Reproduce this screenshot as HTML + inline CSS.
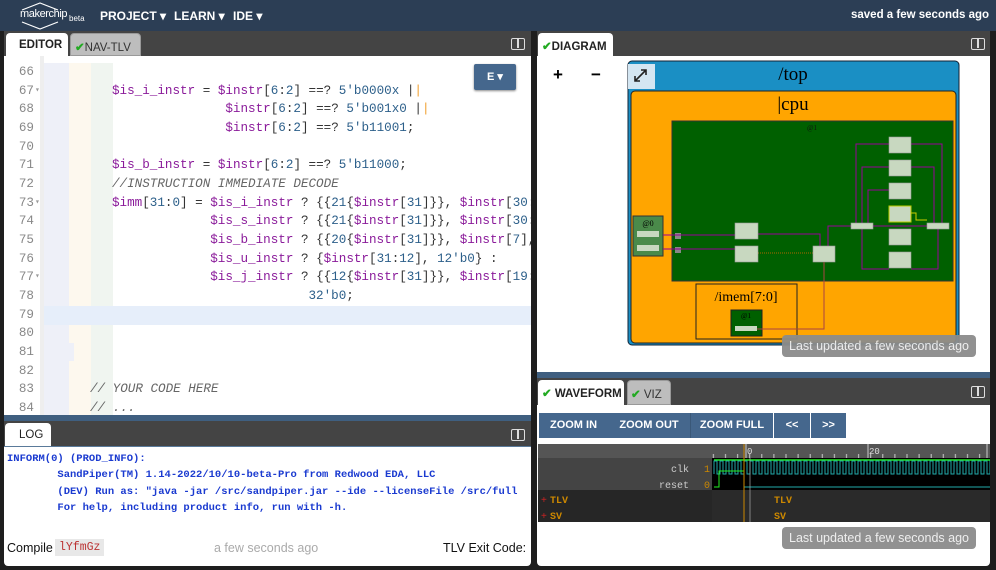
<!DOCTYPE html>
<html><head><meta charset="utf-8"><style>
*{margin:0;padding:0;box-sizing:border-box}
body{width:996px;height:570px;background:#1e1e1e;font-family:"Liberation Sans",sans-serif;position:relative;overflow:hidden}
.abs{position:absolute}
.hdr{left:0;top:0;width:996px;height:31px;background:#2c3e55;color:#fff}
.menu{font-size:12px;font-weight:bold;top:9px;color:#fff}
.tabbar{background:#444;height:25px}
.tab{position:absolute;top:2px;height:23px;font-size:11.5px;font-weight:bold;padding:6px 0 0 6px;border-radius:4px 4px 0 0;white-space:nowrap;overflow:hidden}
.tw{background:#fff;color:#222}
.tg{background:#bdbdbd;color:#333;border:1px solid #999}
.chk{color:#2a2;font-weight:bold}
.split{width:14px;height:12px;border:1.5px solid #ddd;border-radius:2px}
.split:after{content:"";position:absolute;left:5px;top:0;width:1.5px;height:9px;background:#ddd}
.code{font-family:"Liberation Mono",monospace;font-size:12.6px;white-space:pre;line-height:18.67px}
.v{color:#8a1a9a}.n{color:#2c5f8a}.o{color:#333}.c{color:#666;font-style:italic}
.ln{color:#888;text-align:right;width:30px}
.btn{background:#45678d;color:#fff;font-size:11px;font-weight:bold;height:25px;line-height:25px;text-align:center;position:absolute;top:0}
.toast{background:#8c8c8c;color:#eee;font-size:12.5px;border-radius:4px;padding:4px 7px;opacity:.95;white-space:nowrap}
</style></head><body>
<div class="abs hdr">
  <svg class="abs" style="left:18px;top:2px" width="46" height="28"><path d="M4 8 L22 1 L40 8 M4 20 L22 27 L40 20" stroke="#fff" stroke-width="1.2" fill="none"/></svg>
  <div class="abs" style="left:20px;top:8px;font-size:11px;letter-spacing:-0.4px">makerchip</div>
  <div class="abs" style="left:69px;top:14px;font-size:8px">beta</div>
  <div class="abs menu" style="left:100px">PROJECT ▾</div>
  <div class="abs menu" style="left:174px">LEARN ▾</div>
  <div class="abs menu" style="left:233px">IDE ▾</div>
  <div class="abs" style="left:851px;top:9px;font-size:11.5px;font-weight:bold">saved a few seconds ago</div>
</div>

<!-- left panel -->
<div class="abs" style="left:4px;top:31px;width:527px;height:535px;background:#fff;border-radius:0 0 4px 4px"></div>
<div class="abs tabbar" style="left:4px;top:31px;width:527px">
  <div class="tab tw" style="left:2px;width:62px;padding-left:13px">EDITOR</div>
  <div class="tab tg" style="left:66px;width:71px;padding-left:4px;font-weight:normal"><span class="chk">✔</span>NAV-TLV</div>
  <div class="abs split" style="left:507px;top:7px"></div>
</div>
<div class="abs" style="left:4px;top:56px;width:527px;height:359px;background:#fff;overflow:hidden">
  <div class="abs" style="left:36px;top:0;width:4px;height:359px;background:#eee"></div>
  <div class="abs" style="left:40px;top:0;width:25px;height:359px;background:#eef0f8"></div>
  <div class="abs" style="left:65px;top:0;width:22px;height:359px;background:#fdf8ee"></div>
  <div class="abs" style="left:87px;top:0;width:22px;height:359px;background:#f0f5f0"></div>
  <div class="abs" style="left:40px;top:250px;width:487px;height:19px;background:#e6eefa"></div>
  <div class="abs" style="left:40px;top:0;width:487px;height:7px;background:#fff"></div>
  <div class="abs code ln" style="left:0;top:7px">66
67
68
69
70
71
72
73
74
75
76
77
78
79
80
81
82
83
84</div>
  <div class="abs code" style="left:31px;top:7px;color:#999;font-size:8px;line-height:18.67px">
▾





▾



▾</div>
  <div class="abs code" style="left:108px;top:7px">
<span class="v">$is_i_instr</span> <span class="o">=</span> <span class="v">$instr</span><span class="o">[</span><span class="n">6</span><span class="o">:</span><span class="n">2</span><span class="o">] ==?</span> <span class="n">5'b0000x</span> <span class="o">|</span><span style="color:#f0a030">|</span>
               <span class="v">$instr</span><span class="o">[</span><span class="n">6</span><span class="o">:</span><span class="n">2</span><span class="o">] ==?</span> <span class="n">5'b001x0</span> <span class="o">|</span><span style="color:#f0a030">|</span>
               <span class="v">$instr</span><span class="o">[</span><span class="n">6</span><span class="o">:</span><span class="n">2</span><span class="o">] ==?</span> <span class="n">5'b11001</span><span class="o">;</span>

<span class="v">$is_b_instr</span> <span class="o">=</span> <span class="v">$instr</span><span class="o">[</span><span class="n">6</span><span class="o">:</span><span class="n">2</span><span class="o">] ==?</span> <span class="n">5'b11000</span><span class="o">;</span>
<span class="c">//INSTRUCTION IMMEDIATE DECODE</span>
<span class="v">$imm</span><span class="o">[</span><span class="n">31</span><span class="o">:</span><span class="n">0</span><span class="o">] =</span> <span class="v">$is_i_instr</span> <span class="o">? {{</span><span class="n">21</span><span class="o">{</span><span class="v">$instr</span><span class="o">[</span><span class="n">31</span><span class="o">]}},</span> <span class="v">$instr</span><span class="o">[</span><span class="n">30</span><span class="o">:</span>
             <span class="v">$is_s_instr</span> <span class="o">? {{</span><span class="n">21</span><span class="o">{</span><span class="v">$instr</span><span class="o">[</span><span class="n">31</span><span class="o">]}},</span> <span class="v">$instr</span><span class="o">[</span><span class="n">30</span><span class="o">:</span>
             <span class="v">$is_b_instr</span> <span class="o">? {{</span><span class="n">20</span><span class="o">{</span><span class="v">$instr</span><span class="o">[</span><span class="n">31</span><span class="o">]}},</span> <span class="v">$instr</span><span class="o">[</span><span class="n">7</span><span class="o">],</span>
             <span class="v">$is_u_instr</span> <span class="o">? {</span><span class="v">$instr</span><span class="o">[</span><span class="n">31</span><span class="o">:</span><span class="n">12</span><span class="o">],</span> <span class="n">12'b0</span><span class="o">} :</span>
             <span class="v">$is_j_instr</span> <span class="o">? {{</span><span class="n">12</span><span class="o">{</span><span class="v">$instr</span><span class="o">[</span><span class="n">31</span><span class="o">]}},</span> <span class="v">$instr</span><span class="o">[</span><span class="n">19</span><span class="o">:</span>
                          <span class="n">32'b0</span><span class="o">;</span></div>
  <div class="abs code c" style="left:86px;top:324px">// YOUR CODE HERE
// ...</div>
  <div class="abs" style="left:40px;top:287px;width:30px;height:18px;background:#eef0f8"></div>
  <div class="abs" style="left:470px;top:8px;width:42px;height:26px;background:#45678d;color:#fff;font-size:11px;font-weight:bold;text-align:center;line-height:26px;border-radius:2px;box-shadow:0 1px 2px #888">E ▾</div>
</div>
<div class="abs" style="left:4px;top:415px;width:527px;height:6px;background:#3f5f80"></div>
<div class="abs tabbar" style="left:4px;top:421px;width:527px;height:25px">
  <div class="tab tw" style="left:1px;width:46px;padding-left:14px;font-weight:normal">LOG</div>
  <div class="abs split" style="left:507px;top:8px"></div>
</div>
<div class="abs" style="left:4px;top:446px;width:527px;height:1px;background:#5a7a9a"></div>
<div class="abs code" style="left:7px;top:451px;font-size:10.5px;line-height:16.3px;color:#1a3ad0;font-weight:bold;width:523px;overflow:hidden">INFORM(0) (PROD_INFO):
        SandPiper(TM) 1.14-2022/10/10-beta-Pro from Redwood EDA, LLC
        (DEV) Run as: "java -jar /src/sandpiper.jar --ide --licenseFile /src/full
        For help, including product info, run with -h.</div>
<div class="abs" style="left:7px;top:541px;font-size:12.5px;color:#111">Compile</div>
<div class="abs code" style="left:55px;top:539px;background:#e8e8e8;color:#b33;font-size:11.5px;line-height:17px;padding:0 4px">lYfmGz</div>
<div class="abs" style="left:214px;top:541px;font-size:12.5px;color:#aaa">a few seconds ago</div>
<div class="abs" style="left:443px;top:541px;font-size:12.5px;color:#111">TLV Exit Code:</div>

<!-- right panel -->
<div class="abs" style="left:537px;top:31px;width:453px;height:535px;background:#fff;border-radius:0 0 4px 4px"></div>
<div class="abs tabbar" style="left:537px;top:31px;width:453px">
  <div class="tab tw" style="left:1px;width:75px;padding-left:4px"><span class="chk">✔</span>DIAGRAM</div>
  <div class="abs split" style="left:434px;top:7px"></div>
</div>
<div class="abs" style="left:553px;top:65px;font-size:17px;font-weight:bold">+</div>
<div class="abs" style="left:591px;top:65px;font-size:17px;font-weight:bold">−</div>
<svg class="abs" style="left:536px;top:56px" width="454" height="316">
  <rect x="92" y="5" width="331" height="284" rx="4" fill="#1a8fc4" stroke="#123" stroke-width="1"/>
  <rect x="92" y="8" width="27" height="25" fill="#d4e6f2"/>
  <path d="M99 25 L110 14 M105 14 H110 V19 M99 20 V25 H104" stroke="#222" stroke-width="1.6" fill="none"/>
  <text x="257" y="24" font-family="Liberation Serif" font-size="19" text-anchor="middle">/top</text>
  <rect x="95" y="35" width="325" height="252" rx="4" fill="#ffa500" stroke="#222"/>
  <text x="257" y="54" font-family="Liberation Serif" font-size="19" text-anchor="middle">|cpu</text>
  <rect x="136" y="65" width="281" height="160" fill="#006000" stroke="#333"/>
  <text x="276" y="74" font-family="Liberation Serif" font-size="7" text-anchor="middle" fill="#111">@1</text>
  <rect x="97" y="160" width="30" height="40" fill="#4a8a4a" stroke="#333"/>
  <text x="112" y="170" font-family="Liberation Serif" font-size="8" text-anchor="middle">@0</text>
  <rect x="101" y="175" width="22" height="6" fill="#c8d8c0"/><rect x="101" y="189" width="22" height="6" fill="#c8d8c0"/>
  <rect x="139" y="177" width="6" height="6" fill="#888"/><rect x="139" y="191" width="6" height="6" fill="#888"/>
  <g stroke="#909" stroke-width="1" fill="none">
    <path d="M127 179 H199 M127 193 H199 M222 178 H284 V190 M292 190 V170 H315 M337 170 H391 M320 170 V88 H353 M326 170 V111 H353 M332 170 V134 H353 M326 170 V213 H353 M375 88 H406 V167 M375 111 H398 V167 M375 213 H402 V173"/>
  </g>
  <path d="M222 197 H277" stroke="#a60" stroke-dasharray="1 1"/>
  <path d="M375 157 H380 V164 H391" stroke="#cc0" fill="none"/>
  <g fill="#c8d8c0" stroke="#999" stroke-width=".6">
    <rect x="199" y="167" width="23" height="16"/><rect x="199" y="190" width="23" height="16"/>
    <rect x="277" y="190" width="22" height="16"/><rect x="315" y="167" width="22" height="6"/>
    <rect x="391" y="167" width="22" height="6"/>
    <rect x="353" y="81" width="22" height="16"/><rect x="353" y="104" width="22" height="16"/>
    <rect x="353" y="127" width="22" height="16"/><rect x="353" y="150" width="22" height="16" stroke="#bc0" stroke-width="1"/>
    <rect x="353" y="173" width="22" height="16"/><rect x="353" y="196" width="22" height="16"/>
  </g>
  <rect x="160" y="228" width="101" height="55" fill="none" stroke="#222"/>
  <text x="210" y="245" font-family="Liberation Serif" font-size="14" text-anchor="middle">/imem[7:0]</text>
  <rect x="195" y="254" width="31" height="26" fill="#006000" stroke="#222"/>
  <text x="210" y="262" font-family="Liberation Serif" font-size="7" text-anchor="middle">@1</text>
  <rect x="199" y="270" width="22" height="5" fill="#c8d8c0"/>
  <path d="M221 273 H288 V206" stroke="#a44" fill="none"/>
</svg>
<div class="abs toast" style="left:782px;top:335px">Last updated a few seconds ago</div>

<div class="abs" style="left:537px;top:372px;width:453px;height:6px;background:#3f5f80"></div>
<div class="abs tabbar" style="left:537px;top:378px;width:453px;height:27px">
  <div class="tab tw" style="left:1px;width:86px;height:25px;padding-left:4px"><span class="chk">✔</span> WAVEFORM</div>
  <div class="tab tg" style="left:90px;width:44px;height:25px;padding-left:3px;font-weight:normal"><span class="chk">✔</span> VIZ</div>
  <div class="abs split" style="left:434px;top:8px"></div>
</div>
<div class="abs" style="left:539px;top:413px;width:452px;height:25px">
  <div class="btn" style="left:0;width:167px;background:#45678d"></div>
  <div class="btn" style="left:0;width:69px">ZOOM IN</div>
  <div class="btn" style="left:69px;width:82px">ZOOM OUT</div>
  <div class="btn" style="left:151px;width:83px;border-left:1px solid #3a5878">ZOOM FULL</div>
  <div class="btn" style="left:235px;width:36px">&lt;&lt;</div>
  <div class="btn" style="left:272px;width:35px">&gt;&gt;</div>
</div>
<svg class="abs" style="left:538px;top:444px" width="452" height="78">
  <rect width="452" height="78" fill="#2a2a2a"/>
  <rect width="452" height="14" fill="#555"/>
  <rect x="0" y="14" width="174" height="32" fill="#444"/>
  <rect x="174" y="14" width="278" height="32" fill="#000"/>
  <defs>
    <pattern id="t" x="0" y="0" width="12.1" height="14" patternUnits="userSpaceOnUse"><path d="M6 0 V14" stroke="#ccc"/></pattern>
  </defs>
  <rect x="174" y="10" width="278" height="4" fill="url(#t)"/>
  <path d="M208 0 V14 M330 0 V14 M449 0 V14" stroke="#ccc"/>
  <text x="209" y="10" fill="#ddd" font-size="9" font-family="Liberation Mono">0</text>
  <text x="331" y="10" fill="#ddd" font-size="9" font-family="Liberation Mono">20</text>
  <path d="M176 16 H452" stroke="#2e2" stroke-width="1.5"/>
  <path d="M176 30 v-13h3v13h3v-13h3v13h3v-13h3v13h3v-13h3v13h3v-13h3v13h3v-13h3v13h3v-13h3v13h3v-13h3v13h3v-13h3v13h3v-13h3v13h3v-13h3v13h3v-13h3v13h3v-13h3v13h3v-13h3v13h3v-13h3v13h3v-13h3v13h3v-13h3v13h3v-13h3v13h3v-13h3v13h3v-13h3v13h3v-13h3v13h3v-13h3v13h3v-13h3v13h3v-13h3v13h3v-13h3v13h3v-13h3v13h3v-13h3v13h3v-13h3v13h3v-13h3v13h3v-13h3v13h3v-13h3v13h3v-13h3v13h3v-13h3v13h3v-13h3v13h3v-13h3v13h3v-13h3v13h3v-13h3v13h3v-13h3v13h3v-13h3v13h3v-13h3v13h3v-13h3v13h3v-13h3v13h3v-13h3v13h3v-13h3v13h3v-13h3v13h3v-13h3v13h3v-13h3v13h3v-13h3v13h3v-13h3v13h3v-13h3v13h3v-13h3v13h3v-13h3v13h3v-13h3v13h3v-13h3v13h3v-13h3v13h3v-13h3v13h3v-13h3v13h3v-13h3v13h3v-13h3v13h3v-13h3v13h3" stroke="#2aa" stroke-width="1" fill="none"/>
  <path d="M176 43 H181 V27 H206" stroke="#2e2" fill="none"/>
  <path d="M206 43 H452" stroke="#2aa" fill="none"/>
  <text x="151" y="28" fill="#ccc" font-size="10" font-family="Liberation Mono" text-anchor="end">clk</text>
  <text x="151" y="44" fill="#ccc" font-size="10" font-family="Liberation Mono" text-anchor="end">reset</text>
  <text x="166" y="28" fill="#c80" font-size="10" font-family="Liberation Mono">1</text>
  <text x="166" y="44" fill="#c80" font-size="10" font-family="Liberation Mono">0</text>
  <rect x="0" y="46" width="174" height="32" fill="#262626"/>
  <text x="3" y="59" fill="#c22" font-size="10">+</text><text x="12" y="59" fill="#c80" font-size="10" font-family="Liberation Mono" font-weight="bold">TLV</text>
  <text x="3" y="75" fill="#c22" font-size="10">+</text><text x="12" y="75" fill="#c80" font-size="10" font-family="Liberation Mono" font-weight="bold">SV</text>
  <text x="236" y="59" fill="#c80" font-size="10" font-family="Liberation Mono" font-weight="bold">TLV</text>
  <text x="236" y="75" fill="#c80" font-size="10" font-family="Liberation Mono" font-weight="bold">SV</text>
  <path d="M206 0 V78" stroke="#c80"/><path d="M212 14 V78" stroke="#aaa" stroke-width=".7"/>
</svg>
<div class="abs toast" style="left:782px;top:527px">Last updated a few seconds ago</div>
</body></html>
